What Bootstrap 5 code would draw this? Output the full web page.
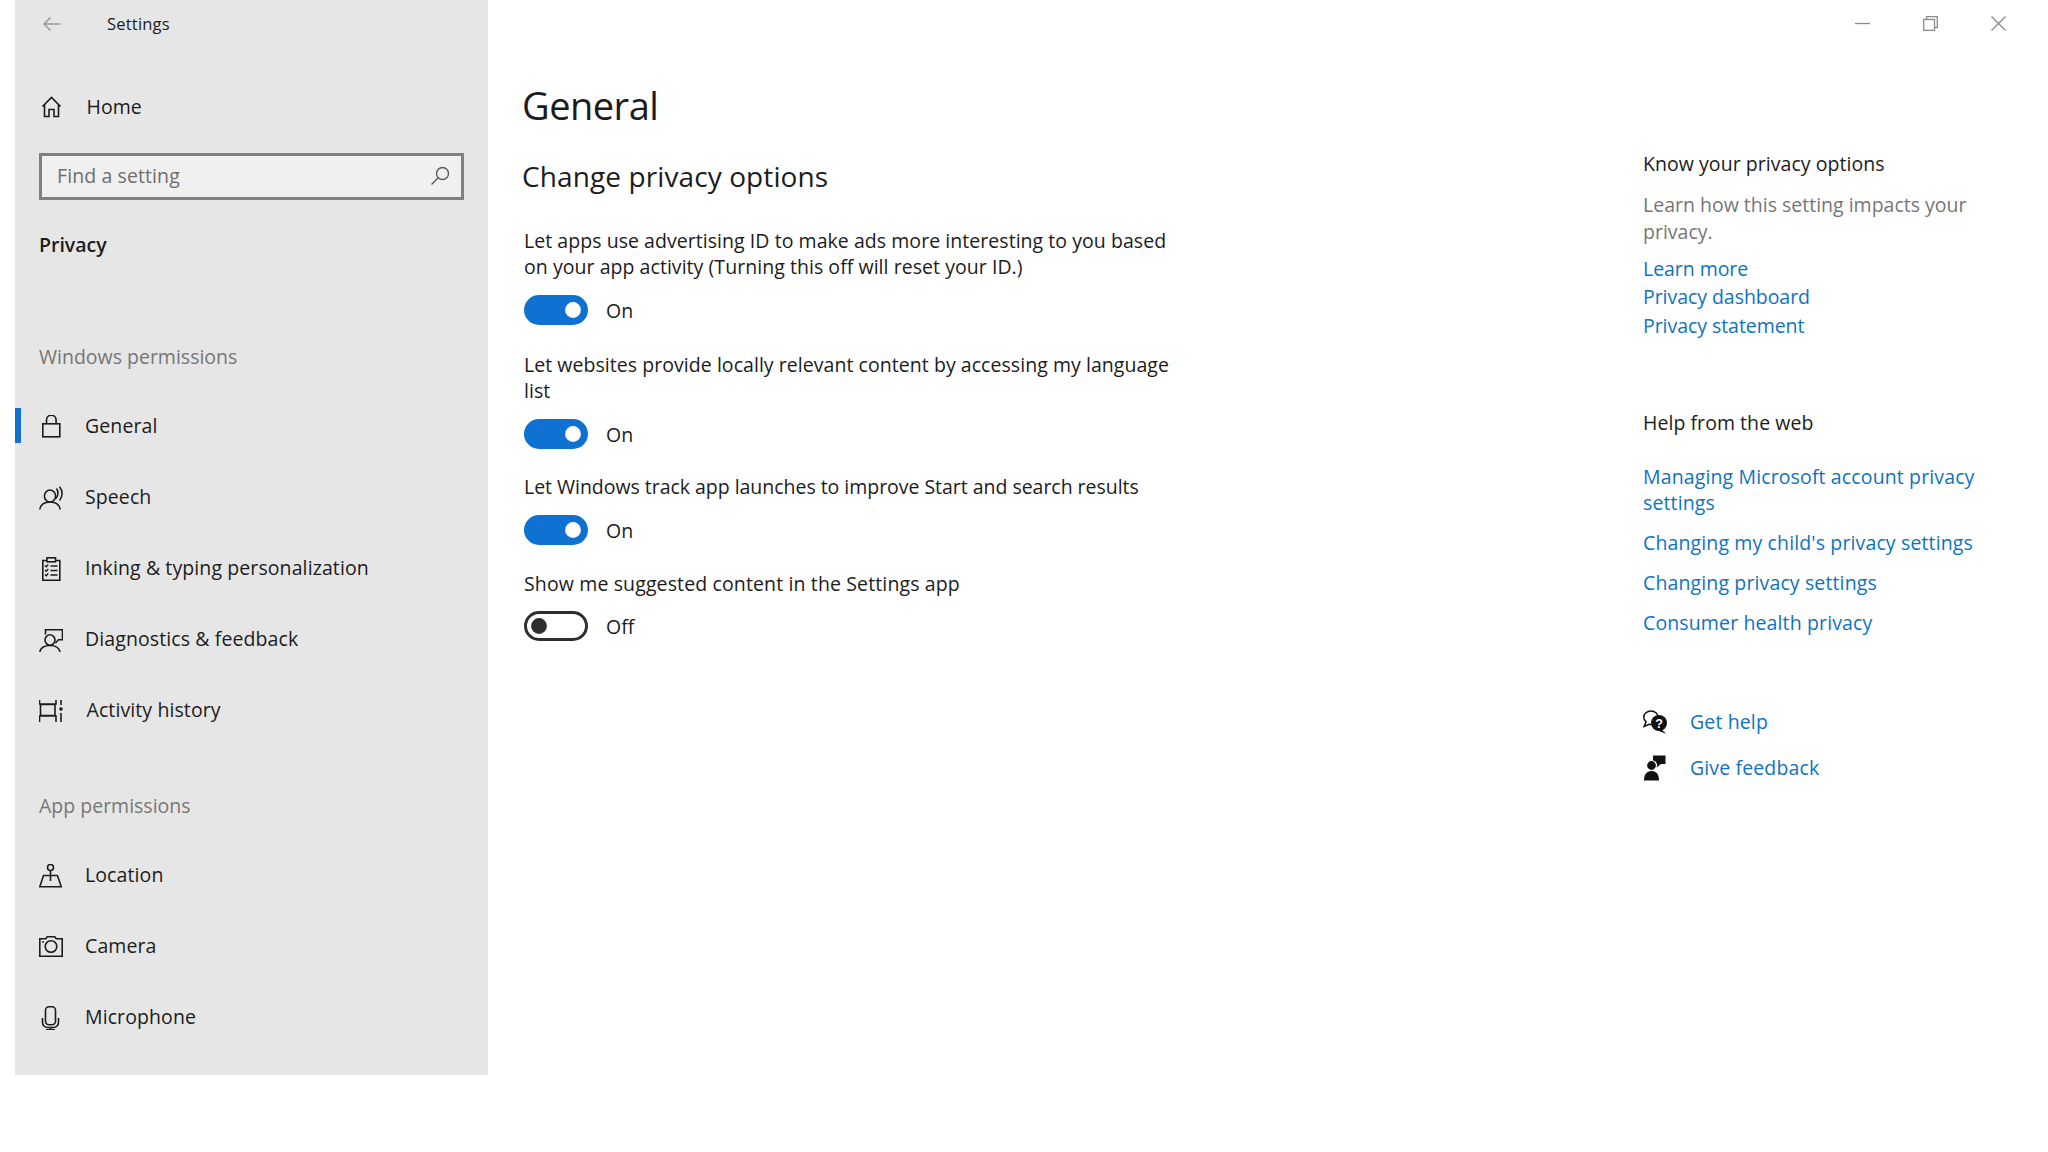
<!DOCTYPE html>
<html lang="en">
<head>
<meta charset="utf-8">
<title>Settings</title>
<link href="https://cdn.jsdelivr.net/npm/bootstrap@5.3.0/dist/css/bootstrap.min.css" rel="stylesheet">
<style>
:root { --ink:#1c1c1c; --mute:#767676; --lnk:#0f72c2; }
html,body { height:100%; background:#fff; }
body { font-family:"Open Sans","Noto Sans","Liberation Sans",sans-serif; color:var(--ink); font-size:19.5px; line-height:26.5px; letter-spacing:.05px; }
.shell { min-height:1152px; }
.side { width:473px; height:1075px; margin-left:15px; background:#e6e6e6; flex:none; }
.side svg, .rail svg { flex:none; }
.ico { fill:none; stroke:#1c1c1c; stroke-width:1.6; }
.tbar { height:48px; padding-left:27px; font-size:16.5px; gap:29px; letter-spacing:.2px; }
.homerow { height:50px; margin-top:34px; padding-left:24px; gap:22px; color:var(--ink); }
.findbox { height:47px; margin:21px 24px 0; border:3px solid #808080; background:#f0f0f0; padding:0 11px 2px 15px; }
.findbox .form-control { background:transparent; border:0; padding:0; box-shadow:none; font-size:inherit; letter-spacing:.1px; color:var(--mute); height:100%; border-radius:0; }
.findbox .form-control::placeholder { color:#6e6e6e; opacity:1; }
.privhead { height:30px; margin-top:30px; padding-left:24px; font-weight:600; letter-spacing:0; }
.grouphead { height:30px; padding-left:24px; color:var(--mute); letter-spacing:0; }
.gh1 { margin-top:82px; }
.gh2 { margin-top:45px; }
.navset { margin-top:19px; }
.navset2 { margin-top:19px; }
.sidelink { height:71px; padding:0 0 0 24px; gap:22px; color:var(--ink); position:relative; letter-spacing:.1px; }
.sidelink:hover { color:var(--ink); }
.sidelink.picked::before { content:""; position:absolute; left:0; top:17px; width:6px; height:35px; background:#0f72d2; }
.nudge { margin-left:1.5px; }
.content { flex:1 1 auto; padding-left:34px; min-width:0; }
.head1 { font-size:38px; line-height:50px; margin:80px 0 0; font-weight:400; letter-spacing:-.5px; }
.head2 { font-size:28px; line-height:40px; margin:26px 0 0; font-weight:400; letter-spacing:.1px; }
.optset { margin-top:32px; padding-left:2px; width:680px; }
.opt { margin-bottom:26px; }
.opt p { margin:0; width:660px; line-height:26px; }
.opt-a { margin-bottom:27.5px; }
.opt-b { margin-bottom:25.5px; }
.opt-c p { letter-spacing:-.03px; }
.opt-d p { letter-spacing:.13px; }
.swrow { margin-top:14.5px; gap:18px; height:30px; }
.swrow .form-check-input { width:64px; height:30px; margin:0; float:none; border:3px solid #2e2e2e; background-color:transparent; border-radius:15px; box-shadow:none; opacity:1;
  background-image:url("data:image/svg+xml,%3csvg xmlns='http://www.w3.org/2000/svg' viewBox='-5 -5 10 10'%3e%3ccircle r='3.3' fill='%232e2e2e'/%3e%3c/svg%3e"); background-position:left center; background-size:contain; background-repeat:no-repeat; }
.swrow .form-check-input:checked { background-color:#0f72d2; border-color:#0f72d2; background-position:right center;
  background-image:url("data:image/svg+xml,%3csvg xmlns='http://www.w3.org/2000/svg' viewBox='-5 -5 10 10'%3e%3ccircle r='3.3' fill='%23fff'/%3e%3c/svg%3e"); }
.swrow .form-check-label { line-height:30px; padding-top:2px; }
.rail { width:405px; flex:none; }
.winbar { height:46px; gap:53px; padding-left:212px; }
.railbody { padding-top:105px; }
.railhead { margin:0; font-size:inherit; font-weight:400; line-height:26.5px; }
.muted-line { color:var(--mute); margin:13px 0 0; width:345px; line-height:27px; letter-spacing:0; }
.lnk { color:var(--lnk); text-decoration:none; display:block; letter-spacing:.13px; }
.lnk:hover { color:var(--lnk); }
.tight { line-height:28.5px; margin-top:10px; }
.tight .lnk { letter-spacing:-.05px; }
.web { margin-top:70.2px; }
.webset { margin-top:27.2px; width:350px; }
.webset .lnk { margin-bottom:13.5px; }
.actions { margin-top:71.8px; gap:19px; }
.actrow { gap:23px; height:27px; }
</style>
</head>
<body>
<div class="shell d-flex">
  <aside class="side d-flex flex-column">
    <div class="tbar d-flex align-items-center">
      <svg width="20" height="16" viewBox="0 0 20 16" fill="none" stroke="#9a9a9a" stroke-width="1.6"><path d="M18.500 8H2M8.500 1.500 2 8l6.500 6.500"/></svg>
      <span class="appname ms-3">Settings</span>
    </div>
    <a href="#" class="homerow d-flex align-items-center text-decoration-none">
      <svg class="ico" width="24" height="24" viewBox="0 0 24 24"><path d="M3.500 11.500 12.500 2.500l9 9M5.500 10v11.500h4.500v-7h5v7h4.500V10"/></svg>
      <span class="nudge">Home</span>
    </a>
    <div class="findbox d-flex align-items-center">
      <input class="form-control" type="text" placeholder="Find a setting" aria-label="Find a setting">
      <svg width="20" height="20" viewBox="0 0 20 20" fill="none" stroke="#5a5a5a" stroke-width="1.400"><circle cx="12.500" cy="7.500" r="6"/><path d="M8 12 1.500 18.500"/></svg>
    </div>
    <div class="privhead d-flex align-items-center">Privacy</div>
    <div class="grouphead gh1 d-flex align-items-center">Windows permissions</div>
    <nav class="nav flex-column navset">
      <a class="nav-link sidelink picked d-flex align-items-center" href="#">
        <svg class="ico" width="24" height="24" viewBox="0 0 24 24"><rect x="3.800" y="8.800" width="17" height="13"/><path d="M7.500 8.800V5a4.800 4.800 0 0 1 9.600 0v3.800"/></svg>
        <span>General</span></a>
      <a class="nav-link sidelink d-flex align-items-center" href="#">
        <svg class="ico" width="24" height="24" viewBox="0 0 24 24"><ellipse cx="11" cy="10" rx="5.600" ry="6"/><path d="M.8 23.500C1.500 19 5 16 11 16s9.500 3 10.200 7.500M17.500 2.500c2 3 2 6.500-.5 10M20.500.8c3.500 4 3.500 9.500 0 13.700"/></svg>
        <span>Speech</span></a>
      <a class="nav-link sidelink d-flex align-items-center" href="#">
        <svg class="ico" width="24" height="24" viewBox="0 0 24 24"><path d="M8 3.500H3.800v19.700h17V3.500H16.500"/><rect x="8" y=".8" width="8.500" height="4"/><path stroke-width="1.300" d="M6 8.500l1.300 1.300 2-2.300M11.500 9h7M6 13l1.300 1.300 2-2.300M11.500 13.500h7M6 17.500l1.300 1.300 2-2.300M11.500 18h7"/></svg>
        <span>Inking &amp; typing personalization</span></a>
      <a class="nav-link sidelink d-flex align-items-center" href="#">
        <svg class="ico" width="24" height="24" viewBox="0 0 24 24"><ellipse cx="11" cy="12" rx="5" ry="5.200"/><path d="M.8 24C1.500 20.500 5 17.500 11 17.500s9.500 3 10 6.500M6.500 6.500V1.800h17v10H19.500l-3 3.200"/></svg>
        <span>Diagnostics &amp; feedback</span></a>
      <a class="nav-link sidelink d-flex align-items-center" href="#">
        <svg class="ico" width="24" height="24" viewBox="0 0 24 24"><path d="M.5 1v4h16.500V1M1.500 5.500h14.500v11H1.500zM.5 23v-6h16.500v6M22 1v5M22 14v9"/><circle cx="22" cy="10" r="1.800" fill="#1c1c1c" stroke="none"/></svg>
        <span class="nudge">Activity history</span></a>
    </nav>
    <div class="grouphead gh2 d-flex align-items-center">App permissions</div>
    <nav class="nav flex-column navset2">
      <a class="nav-link sidelink d-flex align-items-center" href="#">
        <svg class="ico" width="24" height="24" viewBox="0 0 24 24"><circle cx="11.500" cy="3.500" r="3"/><path d="M11.500 6.500V17M4 11.500h15M4.500 11.500.8 22.800h21.400L18.500 11.500"/></svg>
        <span>Location</span></a>
      <a class="nav-link sidelink d-flex align-items-center" href="#">
        <svg class="ico" width="24" height="24" viewBox="0 0 24 24"><path d="M.8 3.800h6l1.400-2h7.600l1.400 2h6v17.400H.8z"/><circle cx="12" cy="11.500" r="5.800"/><circle cx="4" cy="7" r=".9" fill="#1c1c1c" stroke="none"/></svg>
        <span>Camera</span></a>
      <a class="nav-link sidelink d-flex align-items-center" href="#">
        <svg class="ico" width="24" height="24" viewBox="0 0 24 24"><rect x="6.500" y=".8" width="10" height="18" rx="3.500"/><path d="M3.500 12v4.500a5 5 0 0 0 5 5h6a5 5 0 0 0 5-5V12M11.500 21.500v2.500M7 23.800h9"/></svg>
        <span>Microphone</span></a>
    </nav>
  </aside>

  <main class="content">
    <h1 class="head1">General</h1>
    <h2 class="head2">Change privacy options</h2>
    <div class="optset">
      <div class="opt opt-a">
        <p>Let apps use advertising ID to make ads more interesting to you based on your app activity (Turning this off will reset your ID.)</p>
        <div class="swrow d-flex align-items-center">
          <input class="form-check-input" type="checkbox" role="switch" id="s1" checked>
          <label class="form-check-label" for="s1">On</label>
        </div>
      </div>
      <div class="opt opt-b">
        <p>Let websites provide locally relevant content by accessing my language list</p>
        <div class="swrow d-flex align-items-center">
          <input class="form-check-input" type="checkbox" role="switch" id="s2" checked>
          <label class="form-check-label" for="s2">On</label>
        </div>
      </div>
      <div class="opt opt-c">
        <p>Let Windows track app launches to improve Start and search results</p>
        <div class="swrow d-flex align-items-center">
          <input class="form-check-input" type="checkbox" role="switch" id="s3" checked>
          <label class="form-check-label" for="s3">On</label>
        </div>
      </div>
      <div class="opt opt-d">
        <p>Show me suggested content in the Settings app</p>
        <div class="swrow d-flex align-items-center">
          <input class="form-check-input" type="checkbox" role="switch" id="s4">
          <label class="form-check-label" for="s4">Off</label>
        </div>
      </div>
    </div>
  </main>

  <aside class="rail">
    <div class="winbar d-flex align-items-center">
      <svg width="15" height="15" viewBox="0 0 15 15" fill="none" stroke="#8a8a8a" stroke-width="1.300"><path d="M0 7.500h15"/></svg>
      <svg width="15" height="15" viewBox="0 0 15 15" fill="none" stroke="#8a8a8a" stroke-width="1.300"><rect x=".7" y="3.500" width="10.800" height="10.800"/><path d="M3.500 3.500V.7h10.800v10.800h-2.800"/></svg>
      <svg width="15" height="15" viewBox="0 0 15 15" fill="none" stroke="#8a8a8a" stroke-width="1.300"><path d="M.5.500l14 14M14.500.5l-14 14"/></svg>
    </div>
    <div class="railbody">
      <h3 class="railhead">Know your privacy options</h3>
      <p class="muted-line">Learn how this setting impacts your privacy.</p>
      <div class="tight">
        <a class="lnk" href="#">Learn more</a>
        <a class="lnk" href="#">Privacy dashboard</a>
        <a class="lnk" href="#">Privacy statement</a>
      </div>
      <h3 class="railhead web">Help from the web</h3>
      <div class="webset">
        <a class="lnk" href="#">Managing Microsoft account privacy settings</a>
        <a class="lnk" href="#">Changing my child's privacy settings</a>
        <a class="lnk" href="#">Changing privacy settings</a>
        <a class="lnk" href="#">Consumer health privacy</a>
      </div>
      <div class="actions d-flex flex-column">
        <div class="actrow d-flex align-items-center">
          <svg width="24" height="24" viewBox="0 0 24 24"><path d="M8 1C4 1 .8 3.700.8 7.200c0 1.900.9 3.500 2.300 4.600L1 16.500l5-2.200c1.500.3 3 .2 4-.2 3-1 5-3.500 5-6.900C15 3.700 12 1 8 1z" fill="none" stroke="#111" stroke-width="1.500"/><circle cx="16" cy="13" r="8" fill="#111"/><path d="M18 19l5.500 5-7.500-3z" fill="#111"/><text x="16" y="17.500" text-anchor="middle" font-size="12.500" font-weight="700" fill="#fff" font-family="Liberation Sans, sans-serif" letter-spacing="0">?</text></svg>
          <a class="lnk" href="#">Get help</a>
        </div>
        <div class="actrow d-flex align-items-center">
          <svg width="24" height="26" viewBox="0 0 24 26" fill="#111"><path d="M10 .5h12.500v8.500h-4.500l-5 4v-4H10z"/><circle cx="8.500" cy="10.500" r="5" stroke="#fff" stroke-width="1.200"/><path d="M1 25.500c0-6 2.500-9.500 7.500-9.500s7.500 3.500 7.500 9.500z"/></svg>
          <a class="lnk" href="#">Give feedback</a>
        </div>
      </div>
    </div>
  </aside>
</div>
<script src="https://cdn.jsdelivr.net/npm/bootstrap@5.3.0/dist/js/bootstrap.bundle.min.js"></script>
</body>
</html>
